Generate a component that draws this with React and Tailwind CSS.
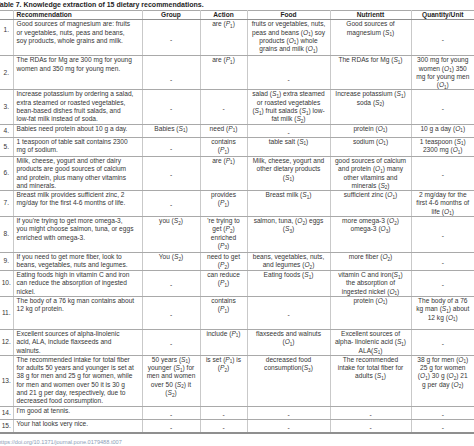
import React from "react";

function rich(s, key) {
  const parts = s.split(/\(([PSO])(\d)\)/);
  const out = [];
  for (let i = 0; i < parts.length; i += 3) {
    if (parts[i]) out.push(<span key={key + "t" + i}>{parts[i]}</span>);
    if (i + 1 < parts.length) {
      out.push(
        <span key={key + "s" + i}>
          (<span className="italic leading-[0px]">{parts[i + 1]}</span>
          <span className="relative top-[1.5px] text-[4.6px] leading-[0px] align-baseline">{parts[i + 2]}</span>)
        </span>
      );
    }
  }
  return out;
}

const rows = [
  {
    n: "1.",
    up: true,
    h: "h-[36px]",
    rec: ["Good sources of magnesium are: fruits", "or vegetables, nuts, peas and beans,", "soy products, whole grains and milk."],
    group: "-",
    action: ["are (P1)"],
    food: ["fruits or vegetables, nuts,", "peas and beans (O1) soy", "products (O1) whole", "grains and milk (O1)"],
    nut: ["Good sources of", "magnesium (S1)"],
    qty: "-",
  },
  {
    n: "2.",
    h: "h-[33px]",
    low: true,
    rec: ["The RDAs for Mg are 300 mg for young", "women and 350 mg for young men."],
    group: "-",
    action: ["are (P1)"],
    food: "-",
    nut: ["The RDAs for Mg (S1)"],
    qty: ["300 mg for young", "women (O1) 350", "mg for young men", "(O1)"],
  },
  {
    n: "3.",
    h: "h-[33px]",
    rec: ["Increase potassium by ordering a salad,", "extra steamed or roasted vegetables,", "bean-based dishes fruit salads, and", "low-fat milk instead of soda."],
    group: "-",
    action: "-",
    food: ["salad (S1) extra steamed", "or roasted vegetables", "(S1) fruit salads (S1) low-", "fat milk (S2)"],
    nut: ["Increase potassium (S1)", "soda (S2)"],
    qty: "-",
  },
  {
    n: "4.",
    h: "h-[11px]",
    rec: ["Babies need protein about 10 g a day."],
    group: ["Babies (S1)"],
    action: ["need (P1)"],
    food: "-",
    nut: ["protein (O1)"],
    qty: ["10 g a day (O1)"],
  },
  {
    n: "5.",
    h: "h-[19px]",
    rec: ["1 teaspoon of table salt contains 2300", "mg of sodium."],
    group: "-",
    action: ["contains", "(P1)"],
    food: ["table salt (S1)"],
    nut: ["sodium (O1)"],
    qty: ["1 teaspoon (S1)", "2300 mg (O1)"],
  },
  {
    n: "6.",
    h: "h-[33px]",
    rec: ["Milk, cheese, yogurt and other dairy", "products are good sources of calcium", "and protein, plus many other vitamins", "and minerals."],
    group: "-",
    action: ["are (P1)"],
    food: ["Milk, cheese, yogurt and", "other dietary products", "(S1)"],
    nut: ["good sources of calcium", "and protein (O1) many", "other vitamins and", "minerals (S2)"],
    qty: "-",
  },
  {
    n: "7.",
    h: "h-[24px]",
    rec: ["Breast milk provides sufficient zinc, 2", "mg/day for the first 4-6 months of life."],
    group: "-",
    action: ["provides", "(P1)"],
    food: ["Breast milk (S1)"],
    nut: ["sufficient zinc (O1)"],
    qty: ["2 mg/day for the", "first 4-6 months of", "life (O1)"],
  },
  {
    n: "8.",
    h: "h-[36px]",
    rec: ["If you're trying to get more omega-3,", "you might choose salmon, tuna, or eggs", "enriched with omega-3."],
    group: ["you (S2)"],
    action: ["'re trying to", "get (P2)", "enriched", "(P3)"],
    food: ["salmon, tuna, (O2) eggs", "(S3)"],
    nut: ["more omega-3 (O2)", "omega-3 (O3)"],
    qty: "-",
  },
  {
    n: "9.",
    h: "h-[18px]",
    rec: ["If you need to get more fiber, look to", "beans, vegetables, nuts and legumes."],
    group: ["You (S2)"],
    action: ["need to get", "(P2)"],
    food: ["beans, vegetables, nuts,", "and legumes (O2)"],
    nut: ["more fiber (O2)"],
    qty: "-",
  },
  {
    n: "10.",
    h: "h-[25px]",
    rec: ["Eating foods high in vitamin C and iron", "can reduce the absorption of ingested", "nickel."],
    group: "-",
    action: ["can reduce", "(P1)"],
    food: ["Eating foods (S1)"],
    nut: ["vitamin C and iron(S1)", "the absorption of", "ingested nickel (O1)"],
    qty: "-",
  },
  {
    n: "11.",
    h: "h-[33px]",
    rec: ["The body of a 76 kg man contains about", "12 kg of protein."],
    group: "-",
    action: ["contains", "(P1)"],
    food: "-",
    nut: ["protein (O1)"],
    qty: ["The body of a 76", "kg man (S1) about", "12 kg (O1)"],
  },
  {
    n: "12.",
    h: "h-[25px]",
    rec: ["Excellent sources of alpha-linolenic", "acid, ALA, include flaxseeds and", "walnuts."],
    group: "-",
    action: ["include (P1)"],
    food: ["flaxseeds and walnuts", "(O1)"],
    nut: ["Excellent sources of", "alpha- linolenic acid (S1)", "ALA(S1)"],
    qty: "-",
  },
  {
    n: "13.",
    h: "h-[51px]",
    rec: [
      "The recommended intake for total fiber",
      "for adults 50 years and younger is set at",
      "38 g for men and 25 g for women, while",
      "for men and women over 50 it is 30 g",
      "and 21 g per day, respectively, due to",
      "decreased food consumption.",
    ],
    group: ["50 years (S1)", "younger (S1) for", "men and women", "over 50 (S2) it", "(S2)"],
    action: ["is set (P1) is", "(P2)"],
    food: ["decreased food", "consumption(S3)"],
    nut: ["The recommended", "intake for total fiber for", "adults (S1)"],
    qty: ["38 g for men (O1)", "25 g for women", "(O1) 30 g (O2) 21", "g per day (O2)"],
  },
  {
    n: "14.",
    h: "h-[9px]",
    rec: ["I'm good at tennis."],
    group: "-",
    action: "-",
    food: "-",
    nut: "-",
    qty: "-",
  },
  {
    n: "15.",
    h: "h-[10px]",
    rec: ["Your hat looks very nice."],
    group: "-",
    action: "-",
    food: "-",
    nut: "-",
    qty: "-",
  },
];

function Lines({ lines, k }) {
  return (
    <div className="flex flex-col">
      {lines.map((l, i) => (
        <div key={k + i} className="h-[8.3px] leading-[8.3px] whitespace-nowrap">
          {rich(l, k + i)}
        </div>
      ))}
    </div>
  );
}

function Cell({ v, k, low, last }) {
  const base =
    "border-l border-b border-l-[#c9c9c9] text-center whitespace-nowrap p-0 " +
    (last ? "border-b-[2px] border-b-[#8f8f8f] " : "border-b-[#a9a9a9] ");
  if (v === "-") {
    return (
      <td className={base + (low ? "align-middle pt-[14px]" : "align-middle pt-[4px]")}>
        <div className="h-[8.3px] leading-[8.3px]">-</div>
      </td>
    );
  }
  return (
    <td className={base + "align-top"}>
      <Lines lines={v} k={k} />
    </td>
  );
}

export default function App() {
  return (
    <div className="w-[474px] h-[446px] overflow-hidden bg-white font-['Liberation_Sans',Arial,sans-serif] text-[#363636]">
      <div className="h-[10px] -ml-[4px] text-[7px] leading-[10px] font-bold text-[#1e1e1e] whitespace-nowrap">
        Table 7. Knowledge extraction of 15 dietary recommendations.
      </div>
      <table className="table-fixed border-collapse w-[474px] text-[6.6px] leading-[8.3px]">
        <colgroup>
          <col className="w-[13px]" />
          <col className="w-[129px]" />
          <col className="w-[58px]" />
          <col className="w-[47px]" />
          <col className="w-[83px]" />
          <col className="w-[81px]" />
          <col className="w-[63px]" />
        </colgroup>
        <thead>
          <tr className="h-[9px] border-t border-t-[#a9a9a9] text-[#1e1e1e]">
            <th className="border-b border-b-[#8f8f8f] p-0"></th>
            <th className="border-l border-b border-l-[#c9c9c9] border-b-[#8f8f8f] text-left pl-[3px] p-0 font-bold">
              Recommendation
            </th>
            <th className="border-l border-b border-l-[#c9c9c9] border-b-[#8f8f8f] p-0 font-bold">Group</th>
            <th className="border-l border-b border-l-[#c9c9c9] border-b-[#8f8f8f] p-0 font-bold">Action</th>
            <th className="border-l border-b border-l-[#c9c9c9] border-b-[#8f8f8f] p-0 font-bold">Food</th>
            <th className="border-l border-b border-l-[#c9c9c9] border-b-[#8f8f8f] p-0 font-bold">Nutrientt</th>
            <th className="border-l border-b border-l-[#c9c9c9] border-b-[#8f8f8f] p-0 font-bold">Quantity/Unit</th>
          </tr>
        </thead>
        <tbody>
          {rows.map((r, ri) => {
            const last = ri === rows.length - 1;
            return (
              <tr key={r.n} className={r.h}>
                <td
                  className={
                    "border-b text-center align-middle p-0 whitespace-nowrap " +
                    (r.up ? "pb-[16px] " : "") +
                    (last ? "border-b-[2px] border-b-[#8f8f8f]" : "border-b-[#a9a9a9]")
                  }
                >
                  <div className="h-[8.3px] leading-[8.3px]">{r.n}</div>
                </td>
                <td
                  className={
                    "border-l border-b border-l-[#c9c9c9] text-left align-top pl-[3px] pr-0 pt-0 whitespace-nowrap " +
                    (last ? "border-b-[2px] border-b-[#8f8f8f]" : "border-b-[#a9a9a9]")
                  }
                >
                  <Lines lines={r.rec} k={r.n + "rec"} />
                </td>
                <Cell v={r.group} k={r.n + "g"} low={r.low} last={last} />
                <Cell v={r.action} k={r.n + "a"} low={r.low} last={last} />
                <Cell v={r.food} k={r.n + "f"} low={r.low} last={last} />
                <Cell v={r.nut} k={r.n + "n"} low={r.low} last={last} />
                <Cell v={r.qty} k={r.n + "q"} low={r.low} last={last} />
              </tr>
            );
          })}
        </tbody>
      </table>
      <div className="mt-[5px] -ml-[2px] text-[5.6px] leading-[7px] text-[#8d9db6] whitespace-nowrap">
        https://doi.org/10.1371/journal.pone.0179488.t007
      </div>
    </div>
  );
}
